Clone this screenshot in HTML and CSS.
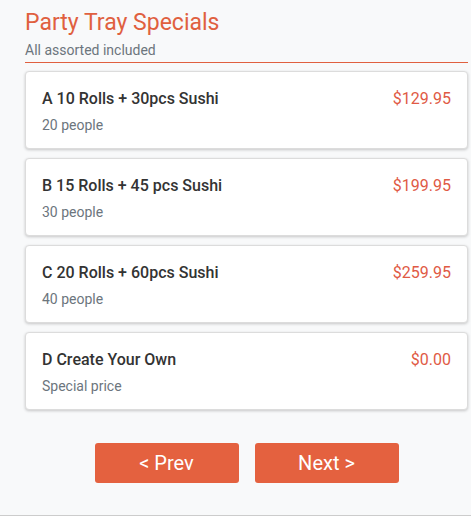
FILE: index.html
```html
<!DOCTYPE html>
<html lang="en">
<head>
    <meta charset="UTF-8">
    <meta name="viewport" content="width=device-width, initial-scale=1.0">
    <title>Party Tray Specials</title>
    <link rel="stylesheet" href="styles.css">
</head>
<body>
    <div id="page">
        <div class="header">
            <h1>Party Tray Specials</h1>
            <div class="subtitle">All assorted included</div>
        </div>

        <div class="tray-list">
            <div class="tray-card">
                <div class="tray-row">
                    <div class="tray-name">A 10 Rolls + 30pcs Sushi</div>
                    <div class="tray-price">$129.95</div>
                </div>
                <div class="tray-note">20 people</div>
            </div>
            <div class="tray-card">
                <div class="tray-row">
                    <div class="tray-name">B 15 Rolls + 45 pcs Sushi</div>
                    <div class="tray-price">$199.95</div>
                </div>
                <div class="tray-note">30 people</div>
            </div>
            <div class="tray-card">
                <div class="tray-row">
                    <div class="tray-name">C 20 Rolls + 60pcs Sushi</div>
                    <div class="tray-price">$259.95</div>
                </div>
                <div class="tray-note">40 people</div>
            </div>
            <div class="tray-card">
                <div class="tray-row">
                    <div class="tray-name">D Create Your Own</div>
                    <div class="tray-price">$0.00</div>
                </div>
                <div class="tray-note">Special price</div>
            </div>
        </div>

        <div class="nav-buttons">
            <button class="nav-btn">&lt; Prev</button>
            <button class="nav-btn">Next &gt;</button>
        </div>
    </div>
</body>
</html>
```

FILE: styles.css
```css
* {
    margin: 0;
    padding: 0;
    box-sizing: border-box;
}

body {
    background-color: #fff;
    font-family: Roboto, 'Liberation Sans', sans-serif;
    color: #333;
}

#page {
    background: #f8f9fa;
    height: 516px;
    border-bottom: 1px solid #ccc;
    padding: 9px 3px 0 25px;
}

.header {
    border-bottom: 1px solid #e0603f;
    padding-bottom: 2px;
}

.header h1 {
    font-size: 23px;
    font-weight: 400;
    color: #e0603f;
    line-height: 28px;
}

.subtitle {
    font-size: 14px;
    color: #6c757d;
    line-height: 20px;
    margin-top: 3px;
}

.tray-list {
    display: flex;
    flex-direction: column;
    gap: 9px;
    margin-top: 8px;
}

.tray-card {
    background: #fff;
    border: 1px solid #dcdcdc;
    border-radius: 4px;
    box-shadow: 0 1px 3px rgba(0, 0, 0, 0.2);
    height: 78px;
    padding: 17px 16px 0 16px;
}

.tray-row {
    display: flex;
    justify-content: space-between;
    align-items: baseline;
}

.tray-name {
    font-size: 16px;
    font-weight: 500;
    color: #333;
    line-height: 20px;
}

.tray-price {
    font-size: 16px;
    color: #e05a45;
    line-height: 20px;
}

.tray-note {
    font-size: 14px;
    color: #6c757d;
    margin-top: 6px;
    line-height: 20px;
}

.nav-buttons {
    display: flex;
    justify-content: center;
    gap: 16px;
    margin-top: 33px;
}

.nav-btn {
    width: 144px;
    height: 40px;
    border: none;
    border-radius: 3px;
    background: #e4613f;
    color: #fff;
    font-family: inherit;
    font-size: 20px;
    cursor: pointer;
}
```
